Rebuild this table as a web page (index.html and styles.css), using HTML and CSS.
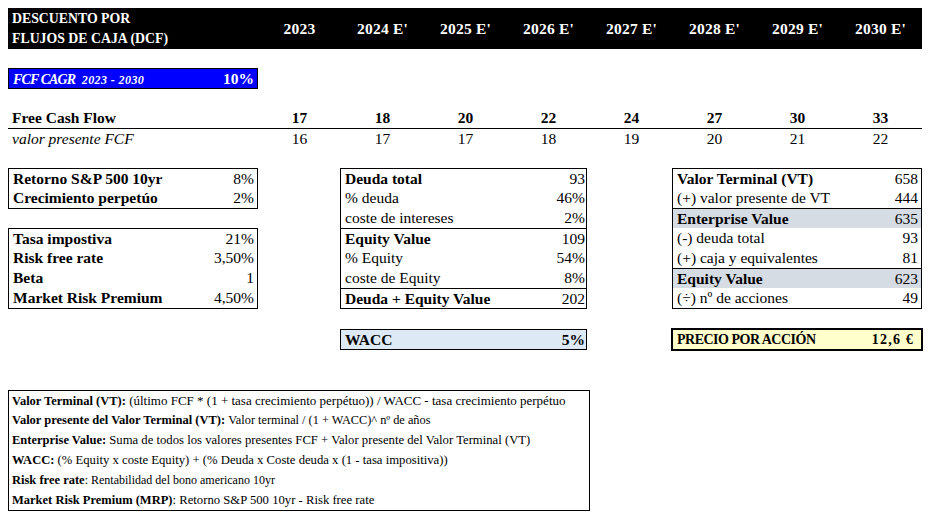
FILE: index.html
```html
<!DOCTYPE html>
<html lang="es">
<head>
<meta charset="utf-8">
<title>DCF</title>
<link rel="stylesheet" href="styles.css">
</head>
<body>
<div class="sheet">
  <div class="hdr">
    <div class="hdr-title">DESCUENTO POR<br>FLUJOS DE CAJA (DCF)</div>
    <div class="yr">2023</div>
    <div class="yr">2024 E'</div>
    <div class="yr">2025 E'</div>
    <div class="yr">2026 E'</div>
    <div class="yr">2027 E'</div>
    <div class="yr">2028 E'</div>
    <div class="yr">2029 E'</div>
    <div class="yr">2030 E'</div>
  </div>

  <div class="cagr">
    <span class="cagr-label">FCF CAGR <span class="cagr-range">2023 - 2030</span></span>
    <span class="cagr-val">10%</span>
  </div>

  <div class="fcf">
    <div class="fcf-row fcf-main">
      <div class="lbl">Free Cash Flow</div>
      <div class="num">17</div><div class="num">18</div><div class="num">20</div><div class="num">22</div>
      <div class="num">24</div><div class="num">27</div><div class="num">30</div><div class="num">33</div>
    </div>
    <div class="fcf-row fcf-pv">
      <div class="lbl">valor presente FCF</div>
      <div class="num">16</div><div class="num">17</div><div class="num">17</div><div class="num">18</div>
      <div class="num">19</div><div class="num">20</div><div class="num">21</div><div class="num">22</div>
    </div>
  </div>

  <div class="boxes">
    <div class="stack stack-left">
      <div class="box">
        <div class="row b"><span>Retorno S&amp;P 500 10yr</span><span>8%</span></div>
        <div class="row b"><span>Crecimiento perpetúo</span><span>2%</span></div>
      </div>
      <div class="box box-gap">
        <div class="row b"><span>Tasa impostiva</span><span class="v">21%</span></div>
        <div class="row b"><span>Risk free rate</span><span class="v">3,50%</span></div>
        <div class="row b"><span>Beta</span><span class="v">1</span></div>
        <div class="row b"><span>Market Risk Premium</span><span class="v">4,50%</span></div>
      </div>
    </div>

    <div class="stack stack-mid">
      <div class="box">
        <div class="row b"><span>Deuda total</span><span class="v">93</span></div>
        <div class="row"><span>% deuda</span><span>46%</span></div>
        <div class="row"><span>coste de intereses</span><span>2%</span></div>
        <div class="row b sep"><span>Equity Value</span><span class="v">109</span></div>
        <div class="row"><span>% Equity</span><span>54%</span></div>
        <div class="row"><span>coste de Equity</span><span>8%</span></div>
        <div class="row b sep"><span>Deuda + Equity Value</span><span class="v">202</span></div>
      </div>
      <div class="wacc"><span>WACC</span><span>5%</span></div>
    </div>

    <div class="stack stack-right">
      <div class="box">
        <div class="row b"><span>Valor Terminal (VT)</span><span class="v">658</span></div>
        <div class="row"><span>(+) valor presente de VT</span><span>444</span></div>
        <div class="row b sep grey"><span>Enterprise Value</span><span class="v">635</span></div>
        <div class="row"><span>(-) deuda total</span><span>93</span></div>
        <div class="row"><span>(+) caja y equivalentes</span><span>81</span></div>
        <div class="row b sep grey"><span>Equity Value</span><span class="v">623</span></div>
        <div class="row"><span>(÷) nº de acciones</span><span>49</span></div>
      </div>
      <div class="precio"><span class="precio-lbl">PRECIO POR ACCIÓN</span><span class="precio-val">12,6 €</span></div>
    </div>
  </div>

  <div class="notes">
    <div class="note"><b>Valor Terminal (VT):</b> (último FCF * (1 + tasa crecimiento perpétuo)) / WACC - tasa crecimiento perpétuo</div>
    <div class="note"><b>Valor presente del Valor Terminal (VT):</b> <span class="cond">Valor terminal / (1 + WACC)^ nº de años</span></div>
    <div class="note note-md"><b>Enterprise Value:</b> Suma de todos los valores presentes FCF + Valor presente del Valor Terminal (VT)</div>
    <div class="note note-md"><b>WACC:</b> (% Equity x coste Equity) + (% Deuda x Coste deuda x (1 - tasa impositiva))</div>
    <div class="note note-sm"><b>Risk free rate</b>: Rentabilidad del bono americano 10yr</div>
    <div class="note note-md"><b>Market Risk Premium (MRP)</b>: Retorno S&amp;P 500 10yr - Risk free rate</div>
  </div>
</div>
</body>
</html>
```

FILE: styles.css
```css
body {
  margin: 8px;
  background: #fff;
  color: #000;
  font-family: "Liberation Serif", "Times New Roman", serif;
  font-size: 15.5px;
}

.sheet {
  width: 914px;
}

/* header bar */
.hdr {
  display: grid;
  grid-template-columns: 250px repeat(8, 83px);
  height: 41px;
  background: #000;
  color: #fff;
  font-weight: bold;
}

.hdr-title {
  padding: 1px 0 0 4px;
  font-size: 13.8px;
  line-height: 20px;
}

.yr {
  display: flex;
  align-items: center;
  justify-content: center;
  font-size: 15.5px;
  letter-spacing: 0.2px;
}

/* CAGR box */
.cagr {
  box-sizing: border-box;
  width: 250px;
  height: 21px;
  margin-top: 19px;
  padding: 0 3px 0 4px;
  display: flex;
  justify-content: space-between;
  align-items: baseline;
  border: 1px solid #000;
  background: #0000ff;
  color: #fff;
  font-weight: bold;
  line-height: 19px;
}

.cagr-label {
  font-style: italic;
  font-size: 14px;
  letter-spacing: -0.9px;
}

.cagr-range {
  font-size: 12px;
  letter-spacing: 0.4px;
  margin-left: 4px;
}

.cagr-val {
  font-size: 15.5px;
}

/* FCF rows */
.fcf {
  margin-top: 19px;
}

.fcf-row {
  display: grid;
  grid-template-columns: 250px repeat(8, 83px);
  height: 20px;
  line-height: 20px;
}

.fcf-main {
  font-weight: bold;
  border-bottom: 1px solid #000;
}

.fcf-pv .lbl {
  font-style: italic;
}

.lbl {
  padding-left: 4px;
}

.num {
  text-align: center;
}

/* boxes */
.boxes {
  margin-top: 19px;
  display: grid;
  grid-template-columns: 250px 82px 247px 85px 250px;
  align-items: start;
}

.stack-left { grid-column: 1; }
.stack-mid { grid-column: 3; }
.stack-right { grid-column: 5; }

.box {
  border: 1px solid #000;
}

.box-gap {
  margin-top: 19px;
}

.row {
  box-sizing: border-box;
  display: flex;
  justify-content: space-between;
  height: 20px;
  line-height: 20px;
  padding: 0 3px 0 4px;
  white-space: nowrap;
}

.row:first-child {
  height: 19px;
  line-height: 19px;
}

.row.b > span:first-child {
  font-weight: bold;
}

.row.sep {
  border-top: 1px solid #000;
  line-height: 19px;
}

.row.grey {
  background: #d6dce4;
}

.stack-mid .row {
  padding-right: 1px;
}

/* WACC */
.wacc {
  margin-top: 20px;
  height: 19px;
  line-height: 19px;
  padding: 0 1px 0 4px;
  display: flex;
  justify-content: space-between;
  border: 1px solid #000;
  background: #dde9f5;
  font-weight: bold;
}

/* price */
.precio {
  width: 237px;
  margin: 19px 0 0 -1px;
  height: 19px;
  line-height: 19px;
  padding: 0 7px 0 4px;
  display: flex;
  justify-content: space-between;
  border: 2px solid #000;
  background: #ffffcc;
  font-weight: bold;
  font-size: 14px;
}

.precio-lbl {
  letter-spacing: -0.5px;
}

.precio-val {
  letter-spacing: 1.2px;
}

/* notes */
.notes {
  width: 580px;
  margin-top: 39px;
  border: 1px solid #000;
  font-size: 13px;
}

.note {
  height: 20px;
  line-height: 20px;
  padding-left: 3px;
  white-space: nowrap;
}

.note:first-child {
  height: 19px;
  line-height: 19px;
}

.note b {
  font-size: 12.5px;
}

.cond {
  font-size: 12.3px;
}

.note-sm {
  font-size: 12px;
}

.note-md {
  font-size: 12.7px;
}
```
